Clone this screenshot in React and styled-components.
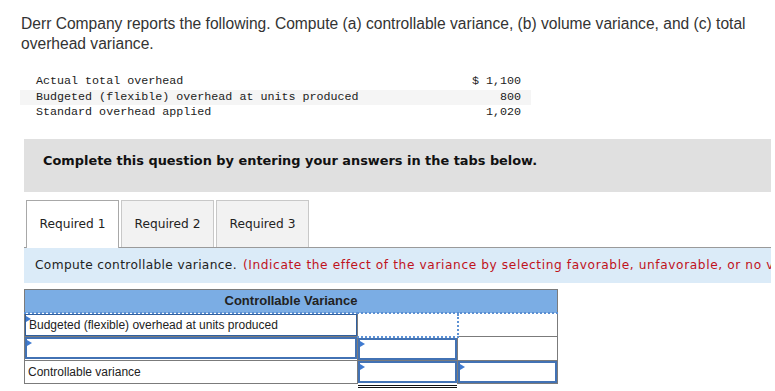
import React from 'react'
import styled, { createGlobalStyle } from 'styled-components'

const GlobalStyle = createGlobalStyle`
  html, body {
    margin: 0;
    padding: 0;
    background: #fff;
  }
  body {
    font-family: "Liberation Sans", Arial, sans-serif;
    color: #222;
  }
`

const Page = styled.div`
  width: 775px;
  height: 391px;
  overflow: hidden;
  padding: 14px 0 0 20px;
  box-sizing: border-box;
`

const Question = styled.p`
  margin: 0 0 20px 1px;
  width: 735px;
  font-family: "Liberation Sans", Arial, sans-serif;
  font-size: 15.6px;
  line-height: 20px;
  color: #333;
`

const DataTable = styled.div`
  width: 511px;
  font-family: "Liberation Mono", "DejaVu Sans Mono", monospace;
  font-size: 11.7px;
  color: #222;
`

const DataRow = styled.div`
  display: flex;
  justify-content: space-between;
  height: 15.5px;
  line-height: 15.5px;
  padding: 0 10px 0 16px;
  background: ${p => (p.$shaded ? '#f5f5f5' : 'transparent')};
  white-space: pre;
`

const Section = styled.div`
  margin: 18px 0 0 4px;
  width: 747px;
`

const Notice = styled.div`
  height: 53px;
  box-sizing: border-box;
  background: #e0e0e0;
  padding: 14px 0 0 19px;
  line-height: 16px;
  font-family: "DejaVu Sans", Verdana, sans-serif;
  font-weight: bold;
  font-size: 12.9px;
  color: #111;
`

const TabBar = styled.div`
  display: flex;
  gap: 2px;
  margin-top: 8px;
  padding-left: 2px;
  height: 48px;
  border-bottom: 1px solid #9a9a9a;
  box-sizing: border-box;
`

const Tab = styled.div`
  width: 93px;
  height: ${p => (p.$active ? '48px' : '47px')};
  box-sizing: border-box;
  border: 1px solid ${p => (p.$active ? '#a8a8a8' : '#c8c8c8')};
  border-bottom: 0;
  background: ${p => (p.$active ? '#fff' : '#f2f2f2')};
  display: flex;
  align-items: center;
  justify-content: center;
  padding-bottom: ${p => (p.$active ? '1px' : '0')};
  font-family: "DejaVu Sans", Verdana, sans-serif;
  font-size: 12.2px;
  color: #222;
  position: relative;
  z-index: 1;
`

const Instruction = styled.div`
  height: 35px;
  background: #dbebf8;
  display: flex;
  align-items: center;
  padding-left: 11px;
  white-space: nowrap;
  overflow: hidden;
  font-family: "DejaVu Sans", Verdana, sans-serif;
  font-size: 12.2px;
  letter-spacing: 0.35px;
  color: #222;
`

const Hint = styled.span`
  color: #c0121c;
  margin-left: 6px;
  letter-spacing: 0.6px;
`

const Grid = styled.table`
  margin-top: 6px;
  width: 534px;
  border-collapse: collapse;
  border: 1px solid #7b7b7b;
  font-family: "Liberation Sans", Arial, sans-serif;
  table-layout: fixed;
`

const HeadCell = styled.th`
  height: 22px;
  padding: 0;
  background: #7badE4;
  border-bottom: 2px dotted #5b8fd2;
  font-size: 13px;
  font-weight: bold;
  color: #222;
  text-align: center;
`

const Cell = styled.td`
  height: 22px;
  padding: 0;
  border: 1px solid #7b7b7b;
  font-size: 12px;
  color: #222;
  ${p => p.$dotted && `
    border-right: 2px dotted #5e92d4;
    border-bottom: 2px dotted #5e92d4;
  `}
`

const Field = styled.div`
  position: relative;
  height: 22px;
  box-sizing: border-box;
  border: ${p => (p.$thin ? '1px solid #2f5f9e' : '2px solid #4272b4')};
  padding-left: 3px;
  line-height: ${p => (p.$thin ? '20px' : '18px')};
  white-space: nowrap;
  overflow: hidden;
  ${p => p.$total && `box-shadow: 0 2px 0 #fff, 0 3px 0 #111, 0 4px 0 #fff, 0 5px 0 #111;`}
  &::before {
    content: '';
    position: absolute;
    left: 0;
    top: 1px;
    border-left: 5px solid #3f7ad0;
    border-top: 3.5px solid transparent;
    border-bottom: 3.5px solid transparent;
  }
`

const Plain = styled.div`
  height: 22px;
  line-height: 22px;
  padding-left: 3px;
`

const rows = [
  { label: 'Actual total overhead', value: '$ 1,100' },
  { label: 'Budgeted (flexible) overhead at units produced', value: '800', shaded: true },
  { label: 'Standard overhead applied', value: '1,020' }
]

export default function App () {
  return <Page>
    <GlobalStyle />
    <Question>
      Derr Company reports the following. Compute (a) controllable variance, (b) volume variance, and (c) total overhead variance.
    </Question>
    <DataTable>
      {
        rows.map((r, i) => (
          <DataRow key={i} $shaded={r.shaded}>
            <span>{r.label}</span>
            <span>{r.value}</span>
          </DataRow>
        ))
      }
    </DataTable>
    <Section>
      <Notice>Complete this question by entering your answers in the tabs below.</Notice>
      <TabBar>
        <Tab $active>Required 1</Tab>
        <Tab>Required 2</Tab>
        <Tab>Required 3</Tab>
      </TabBar>
      <Instruction>
        Compute controllable variance.
        <Hint>(Indicate the effect of the variance by selecting favorable, unfavorable, or no variance.)</Hint>
      </Instruction>
      <Grid>
        <colgroup>
          <col style={{ width: 333 }} />
          <col style={{ width: 100 }} />
          <col style={{ width: 100 }} />
        </colgroup>
        <thead>
          <tr><HeadCell colSpan={3}>Controllable Variance</HeadCell></tr>
        </thead>
        <tbody>
          <tr>
            <Cell><Field $thin>Budgeted (flexible) overhead at units produced</Field></Cell>
            <Cell $dotted />
            <Cell />
          </tr>
          <tr>
            <Cell><Field /></Cell>
            <Cell><Field /></Cell>
            <Cell />
          </tr>
          <tr>
            <Cell><Plain>Controllable variance</Plain></Cell>
            <Cell><Field $total /></Cell>
            <Cell><Field /></Cell>
          </tr>
        </tbody>
      </Grid>
    </Section>
  </Page>
}
